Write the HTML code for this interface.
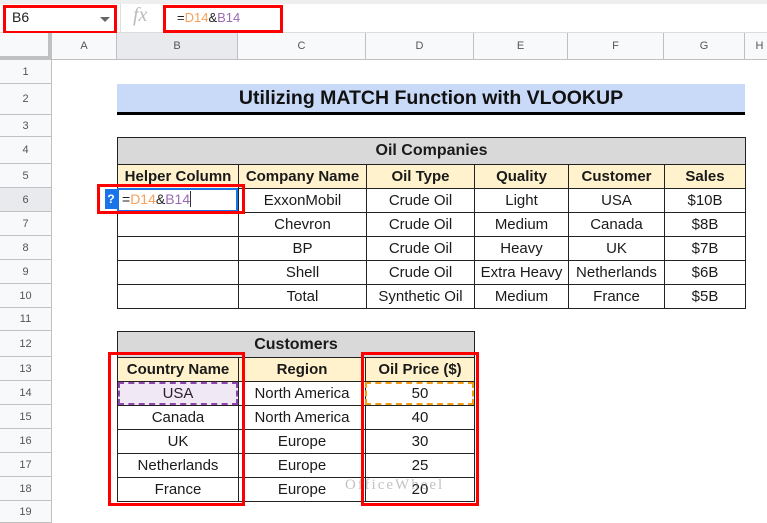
<!DOCTYPE html>
<html><head><style>
*{box-sizing:border-box;margin:0;padding:0}
body{width:767px;height:523px;overflow:hidden;background:#fff;font-family:"Liberation Sans",Arial,sans-serif;position:relative;color:#222}
.a{position:absolute}
.colh{position:absolute;top:33px;height:27px;background:#f8f9fa;border-right:1px solid #c0c0c0;border-bottom:1px solid #c0c0c0;font-size:11px;color:#555;text-align:center;line-height:27px}
.rowh{position:absolute;left:0;width:52px;background:#f8f9fa;border-bottom:1px solid #c0c0c0;border-right:1px solid #c0c0c0;font-size:11px;color:#555;text-align:center}
table{position:absolute;border-collapse:collapse;table-layout:fixed;font-size:15px}
td{border:1px solid #222;text-align:center;padding:0;white-space:nowrap;overflow:hidden;color:#1a1a1a}
.h{background:#fff2cc;font-weight:bold}
.t{background:#d9d9d9;font-weight:bold;font-size:16px}
.red{position:absolute;border:3px solid #f00}
</style></head><body>
<div class="a" style="left:0;top:0;width:767px;height:33px;background:#fff;border-bottom:1px solid #ddd;border-top:4px solid #eee"></div>
<div class="a" style="left:12px;top:9px;font-size:14px;color:#222">B6</div>
<div class="a" style="left:100px;top:17px;width:0;height:0;border-left:5px solid transparent;border-right:5px solid transparent;border-top:5px solid #666"></div>
<div class="a" style="left:120px;top:4px;width:1px;height:28px;background:#ddd"></div>
<div class="a" style="left:133px;top:4px;font-size:20px;font-style:italic;color:#bbb;font-family:'Liberation Serif',serif">fx</div>
<div class="a" style="left:177px;top:10px;font-size:13px;color:#222">=<span style="color:#f5a05a">D14</span>&amp;<span style="color:#9a6bb5">B14</span></div>
<div class="red" style="left:3px;top:5px;width:114px;height:29px"></div>
<div class="red" style="left:163px;top:5px;width:120px;height:28px"></div>
<div class="colh" style="left:0;width:52px;border-right:4px solid #c0c0c0;border-bottom:4px solid #c0c0c0"></div>
<div class="colh" style="left:52px;width:65px">A</div>
<div class="colh" style="left:117px;width:121px;background:#e8eaed">B</div>
<div class="colh" style="left:238px;width:128px">C</div>
<div class="colh" style="left:366px;width:108px">D</div>
<div class="colh" style="left:474px;width:94px">E</div>
<div class="colh" style="left:568px;width:96px">F</div>
<div class="colh" style="left:664px;width:81px">G</div>
<div class="colh" style="left:745px;width:30px">H</div>
<div class="rowh" style="top:60px;height:24px;line-height:24px">1</div>
<div class="rowh" style="top:84px;height:31px;line-height:31px">2</div>
<div class="rowh" style="top:115px;height:22px;line-height:22px">3</div>
<div class="rowh" style="top:137px;height:27px;line-height:27px">4</div>
<div class="rowh" style="top:164px;height:24px;line-height:24px">5</div>
<div class="rowh" style="top:188px;height:24px;line-height:24px;background:#e8eaed">6</div>
<div class="rowh" style="top:212px;height:24px;line-height:24px">7</div>
<div class="rowh" style="top:236px;height:24px;line-height:24px">8</div>
<div class="rowh" style="top:260px;height:24px;line-height:24px">9</div>
<div class="rowh" style="top:284px;height:24px;line-height:24px">10</div>
<div class="rowh" style="top:308px;height:23px;line-height:23px">11</div>
<div class="rowh" style="top:331px;height:26px;line-height:26px">12</div>
<div class="rowh" style="top:357px;height:24px;line-height:24px">13</div>
<div class="rowh" style="top:381px;height:24px;line-height:24px">14</div>
<div class="rowh" style="top:405px;height:24px;line-height:24px">15</div>
<div class="rowh" style="top:429px;height:24px;line-height:24px">16</div>
<div class="rowh" style="top:453px;height:24px;line-height:24px">17</div>
<div class="rowh" style="top:477px;height:24px;line-height:24px">18</div>
<div class="rowh" style="top:501px;height:22px;line-height:22px">19</div>
<div class="a" style="left:117px;top:84px;width:628px;height:31px;background:#c9daf8;border-bottom:3px solid #000;text-align:center;font-weight:bold;font-size:19.5px;line-height:29px;color:#111">Utilizing MATCH Function with VLOOKUP</div>
<table style="left:117px;top:137px;width:628px">
<colgroup><col style="width:121px"><col style="width:128px"><col style="width:108px"><col style="width:94px"><col style="width:96px"><col style="width:81px"></colgroup>
<tr style="height:27px"><td class="t" colspan="6">Oil Companies</td></tr>
<tr style="height:24px"><td class="h">Helper Column</td><td class="h">Company Name</td><td class="h">Oil Type</td><td class="h">Quality</td><td class="h">Customer</td><td class="h">Sales</td></tr>
<tr style="height:24px"><td></td><td>ExxonMobil</td><td>Crude Oil</td><td>Light</td><td>USA</td><td>$10B</td></tr>
<tr style="height:24px"><td></td><td>Chevron</td><td>Crude Oil</td><td>Medium</td><td>Canada</td><td>$8B</td></tr>
<tr style="height:24px"><td></td><td>BP</td><td>Crude Oil</td><td>Heavy</td><td>UK</td><td>$7B</td></tr>
<tr style="height:24px"><td></td><td>Shell</td><td>Crude Oil</td><td>Extra Heavy</td><td>Netherlands</td><td>$6B</td></tr>
<tr style="height:24px"><td></td><td>Total</td><td>Synthetic Oil</td><td>Medium</td><td>France</td><td>$5B</td></tr>
</table>
<div class="a" style="left:117px;top:188px;width:121px;height:24px;background:#fff;border:2px solid #1a73e8"></div>
<div class="a" style="left:122px;top:191px;font-size:14px">=<span style="color:#f5a05a">D14</span>&amp;<span style="color:#9a6bb5">B14</span><span style="display:inline-block;width:1px;height:16px;background:#333;vertical-align:-3px"></span></div>
<div class="a" style="left:105px;top:189px;width:12px;height:20px;background:#1a73e8;color:#fff;font-size:12px;font-weight:bold;text-align:center;line-height:20px">?</div>
<div class="red" style="left:97px;top:184px;width:148px;height:30px"></div>
<table style="left:117px;top:331px;width:357px">
<colgroup><col style="width:121px"><col style="width:127px"><col style="width:109px"></colgroup>
<tr style="height:26px"><td class="t" colspan="3">Customers</td></tr>
<tr style="height:24px"><td class="h">Country Name</td><td class="h">Region</td><td class="h">Oil Price ($)</td></tr>
<tr style="height:24px"><td>USA</td><td>North America</td><td>50</td></tr>
<tr style="height:24px"><td>Canada</td><td>North America</td><td>40</td></tr>
<tr style="height:24px"><td>UK</td><td>Europe</td><td>30</td></tr>
<tr style="height:24px"><td>Netherlands</td><td>Europe</td><td>25</td></tr>
<tr style="height:24px"><td>France</td><td>Europe</td><td>20</td></tr>
</table>
<div class="a" style="left:118px;top:382px;width:120px;height:23px;border:2px dashed #8e44ad;background:rgba(142,68,173,0.12)"></div>
<div class="a" style="left:365px;top:382px;width:109px;height:23px;border:2px dashed #f39c12"></div>
<div class="red" style="left:108px;top:352px;width:137px;height:154px"></div>
<div class="red" style="left:361px;top:352px;width:118px;height:154px"></div>
<div class="a" style="left:345px;top:477px;font-size:15px;letter-spacing:2px;color:rgba(120,120,120,0.45);font-family:'Liberation Serif',serif">OfficeWheel</div>
</body></html>
